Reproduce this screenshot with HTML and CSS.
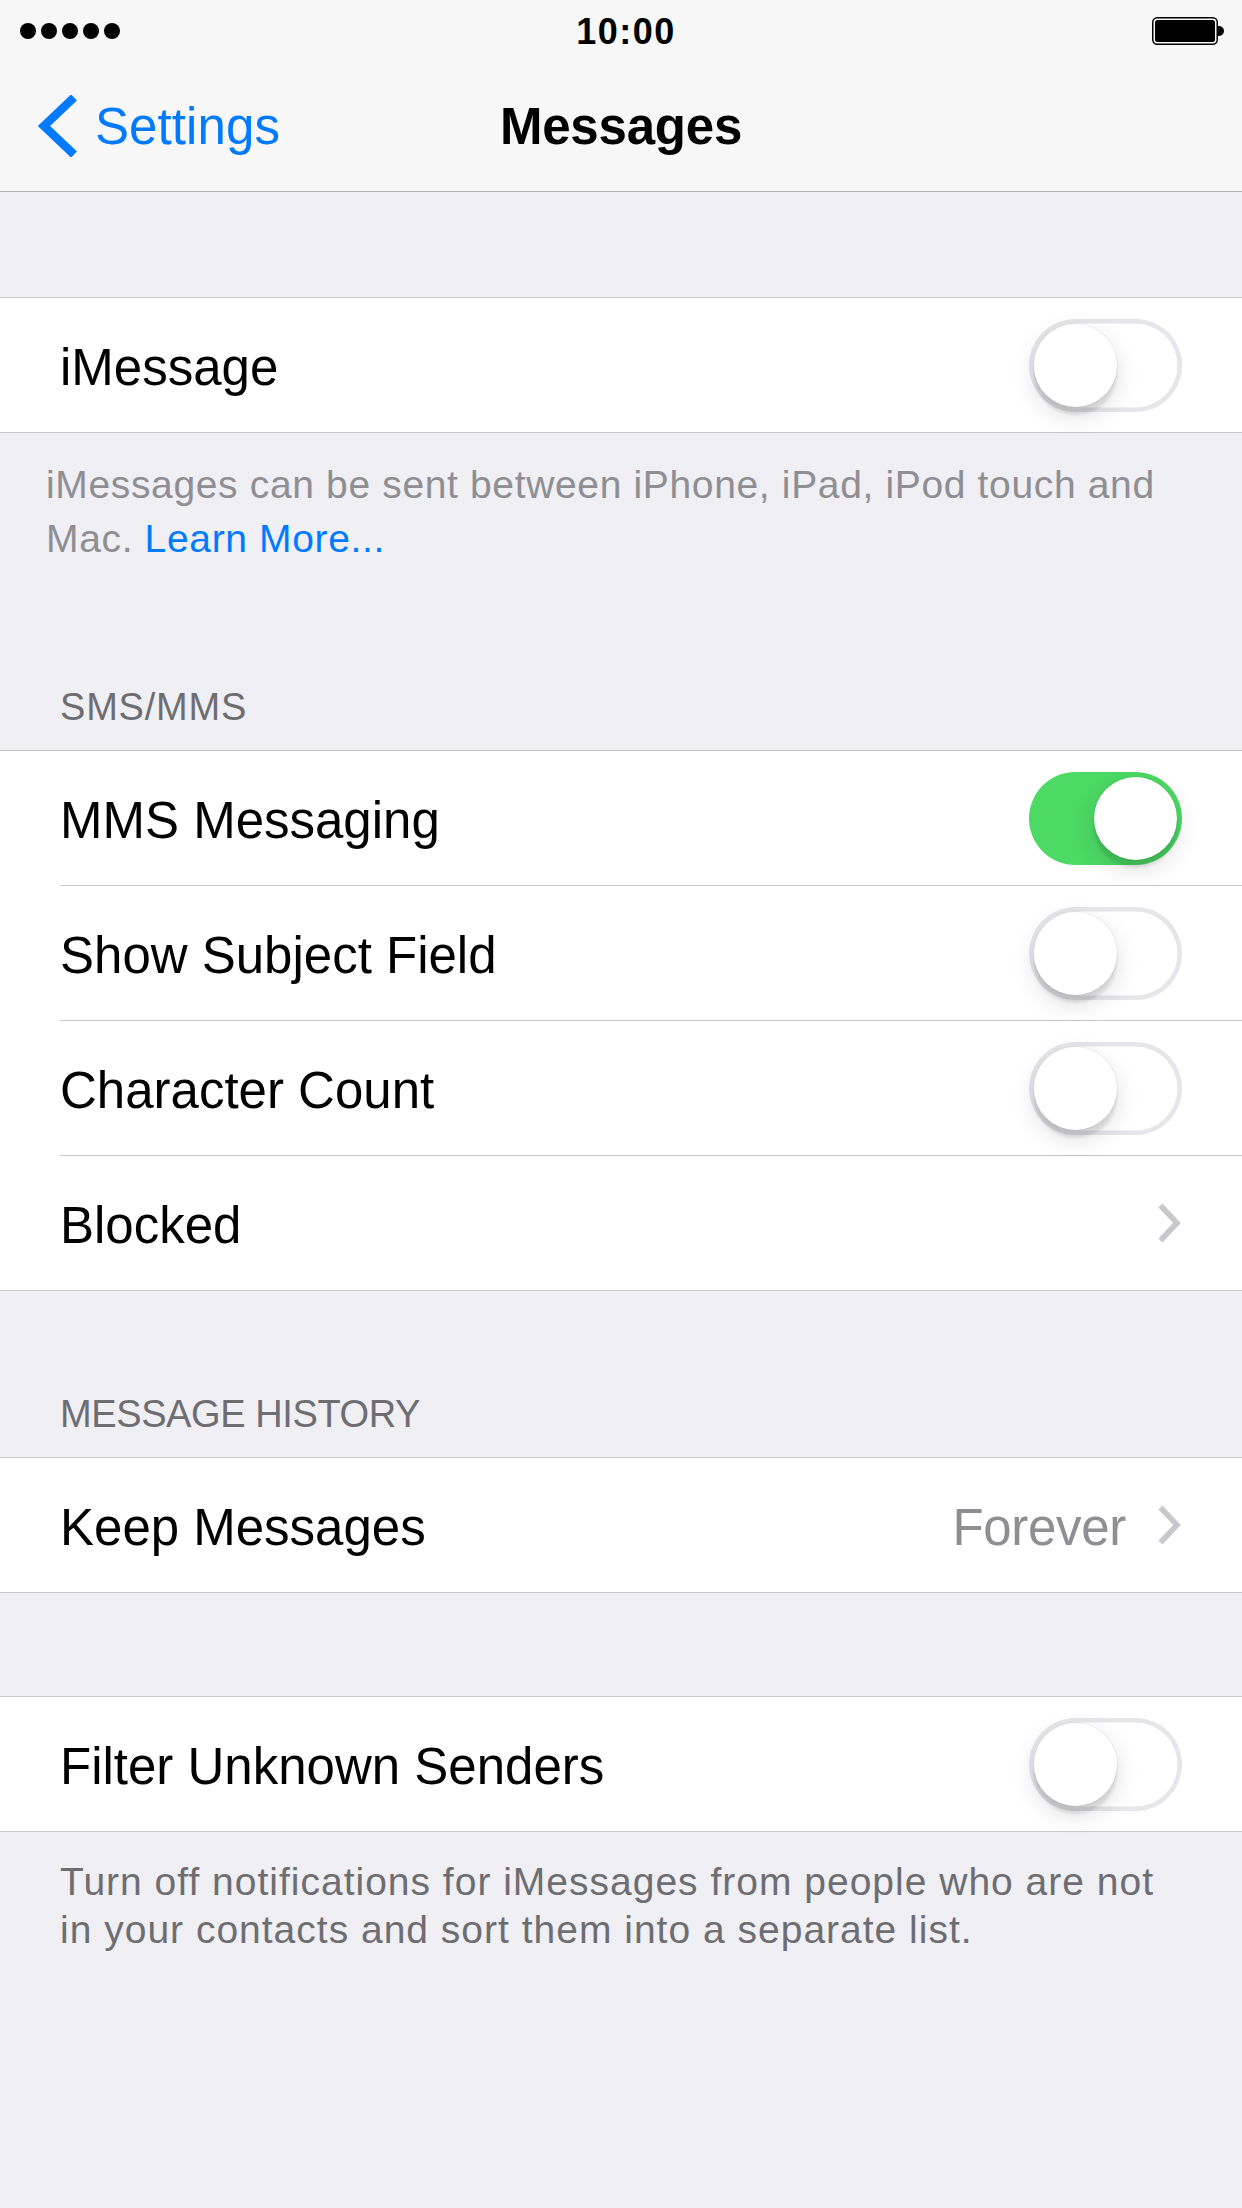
FILE: index.html
```html
<!DOCTYPE html>
<html lang="en">
<head>
<meta charset="utf-8">
<title>Messages</title>
<link rel="stylesheet" href="styles.css">
</head>
<body>
<div class="screen">
  <div class="status-bar">
    <svg class="signal" width="100" height="16" viewBox="0 0 100 16">
      <circle cx="8" cy="8" r="8"/>
      <circle cx="29" cy="8" r="8"/>
      <circle cx="50" cy="8" r="8"/>
      <circle cx="71" cy="8" r="8"/>
      <circle cx="92" cy="8" r="8"/>
    </svg>
    <div class="time">10:00</div>
    <svg class="battery" width="72" height="28" viewBox="0 0 72 28">
      <rect x="0.75" y="0.75" width="64.5" height="26.5" rx="4.5" fill="none" stroke="#000" stroke-width="1.5"/>
      <rect x="3" y="3" width="60" height="22" rx="2.5" fill="#000"/>
      <path d="M66 9 h1 a5 5 0 0 1 0 10 h-1 z" fill="#000"/>
    </svg>
  </div>

  <header class="nav-bar">
    <a class="back">
      <svg class="back-chevron" width="40" height="62" viewBox="0 0 40 62">
        <polyline points="37,2.5 7,31 37,59.5" fill="none" stroke="#007aff" stroke-width="8.5" stroke-linejoin="miter"/>
      </svg>
      <span class="back-label">Settings</span>
    </a>
    <h1 class="nav-title">Messages</h1>
    <div class="nav-spacer"></div>
  </header>

  <main class="content">
    <div class="gap"></div>

    <section class="group">
      <div class="cell">
        <span class="cell-label">iMessage</span>
        <span class="switch"><span class="knob"></span></span>
      </div>
    </section>
    <p class="footer footer-imessage">iMessages can be sent between iPhone, iPad, iPod touch and Mac. <span class="link">Learn More...</span></p>

    <h2 class="section-header header-sms">SMS/MMS</h2>
    <section class="group">
      <div class="cell">
        <span class="cell-label">MMS Messaging</span>
        <span class="switch on"><span class="knob"></span></span>
      </div>
      <div class="cell">
        <span class="cell-label">Show Subject Field</span>
        <span class="switch"><span class="knob"></span></span>
      </div>
      <div class="cell">
        <span class="cell-label">Character Count</span>
        <span class="switch"><span class="knob"></span></span>
      </div>
      <div class="cell">
        <span class="cell-label">Blocked</span>
        <svg class="disclosure" width="24" height="40" viewBox="0 0 24 40">
          <polyline points="2.5,2.5 19,20 2.5,37.5" fill="none" stroke="#c7c7cc" stroke-width="5.5"/>
        </svg>
      </div>
    </section>

    <h2 class="section-header header-history">Message History</h2>
    <section class="group">
      <div class="cell">
        <span class="cell-label">Keep Messages</span>
        <span class="cell-value">Forever</span>
        <svg class="disclosure" width="24" height="40" viewBox="0 0 24 40">
          <polyline points="2.5,2.5 19,20 2.5,37.5" fill="none" stroke="#c7c7cc" stroke-width="5.5"/>
        </svg>
      </div>
    </section>

    <div class="gap gap-small"></div>

    <section class="group">
      <div class="cell">
        <span class="cell-label">Filter Unknown Senders</span>
        <span class="switch"><span class="knob"></span></span>
      </div>
    </section>
    <p class="footer footer-filter">Turn off notifications for iMessages from people who are not in your contacts and sort them into a separate list.</p>
  </main>
</div>
</body>
</html>
```

FILE: styles.css
```css
* {
  box-sizing: border-box;
}

html, body {
  margin: 0;
  padding: 0;
}

body {
  background: #efeff4;
  font-family: "Liberation Sans", Arial, sans-serif;
  color: #000;
}

.screen {
  width: 1242px;
  min-height: 2208px;
  background: #efeff4;
}

/* Status bar */
.status-bar {
  height: 60px;
  background: #f7f7f7;
  display: grid;
  grid-template-columns: 1fr auto 1fr;
  align-items: center;
  padding: 0 18px 0 20px;
}

.signal {
  display: block;
  fill: #000;
  justify-self: start;
}

.time {
  font-size: 36px;
  font-weight: 700;
  letter-spacing: 1.5px;
  line-height: 60px;
  padding-top: 2px;
  text-align: center;
  padding-left: 8px;
}

.battery {
  display: block;
  justify-self: end;
}

/* Navigation bar */
.nav-bar {
  height: 132px;
  background: #f7f7f7;
  border-bottom: 1px solid #b2b2b2;
  display: grid;
  grid-template-columns: 1fr auto 1fr;
  align-items: center;
}

.back {
  display: flex;
  align-items: center;
  padding-left: 37px;
  color: #007aff;
  justify-self: start;
}

.back-chevron {
  display: block;
}

.back-label {
  font-size: 51px;
  line-height: 60px;
  margin-left: 18px;
  padding-top: 2px;
  letter-spacing: 0.1px;
}

.nav-title {
  margin: 0;
  font-size: 51px;
  font-weight: 700;
  line-height: 60px;
  padding-top: 2px;
  letter-spacing: -0.2px;
}

/* Content */
.content {
  display: flex;
  flex-direction: column;
}

.gap {
  height: 105px;
}

.gap-small {
  height: 103px;
}

.group {
  background: #fff;
  border-top: 1px solid #c8c7cc;
  border-bottom: 1px solid #c8c7cc;
}

.cell {
  height: 135px;
  margin-left: 60px;
  padding-right: 60px;
  border-bottom: 1px solid #c8c7cc;
  display: flex;
  align-items: center;
}

.cell:last-child {
  height: 134px;
  border-bottom: none;
}

.cell-label {
  flex: 1;
  font-size: 51px;
  line-height: 60px;
  padding-top: 6px;
  white-space: nowrap;
}

.cell-value {
  font-size: 51px;
  line-height: 60px;
  padding-top: 6px;
  color: #8e8e93;
  margin-right: 32px;
  letter-spacing: -0.3px;
}

.disclosure {
  display: block;
}

/* Switch */
.switch {
  width: 153px;
  height: 93px;
  border-radius: 47px;
  background: #fff;
  box-shadow: inset 0 0 0 4.5px #e5e5ea;
  display: flex;
  align-items: center;
  padding: 0 5px;
  flex-shrink: 0;
}

.switch.on {
  background: #4cd964;
  box-shadow: none;
  justify-content: flex-end;
}

.knob {
  width: 83px;
  height: 83px;
  border-radius: 50%;
  background: #fff;
  box-shadow: 0 0 0 1px rgba(0, 0, 0, 0.05),
              0 8px 3px rgba(0, 0, 0, 0.09),
              0 9px 24px rgba(0, 0, 0, 0.13);
}

/* Footers & headers */
.footer {
  margin: 0;
  font-size: 39px;
}

.footer-imessage {
  color: #8e8e93;
  line-height: 54px;
  padding: 25px 46px 0 46px;
  letter-spacing: 0.65px;
}

.link {
  color: #007aff;
}

.footer-filter {
  color: #6d6d72;
  line-height: 48px;
  padding: 26px 70px 0 60px;
  letter-spacing: 1px;
}

.section-header {
  margin: 0;
  font-size: 38px;
  font-weight: 400;
  line-height: 46px;
  color: #6d6d72;
  text-transform: uppercase;
  padding: 0 60px 20px 60px;
}

.header-sms {
  padding-top: 118px;
  letter-spacing: 0.8px;
}

.header-history {
  padding-top: 100px;
  letter-spacing: -0.4px;
}
```
